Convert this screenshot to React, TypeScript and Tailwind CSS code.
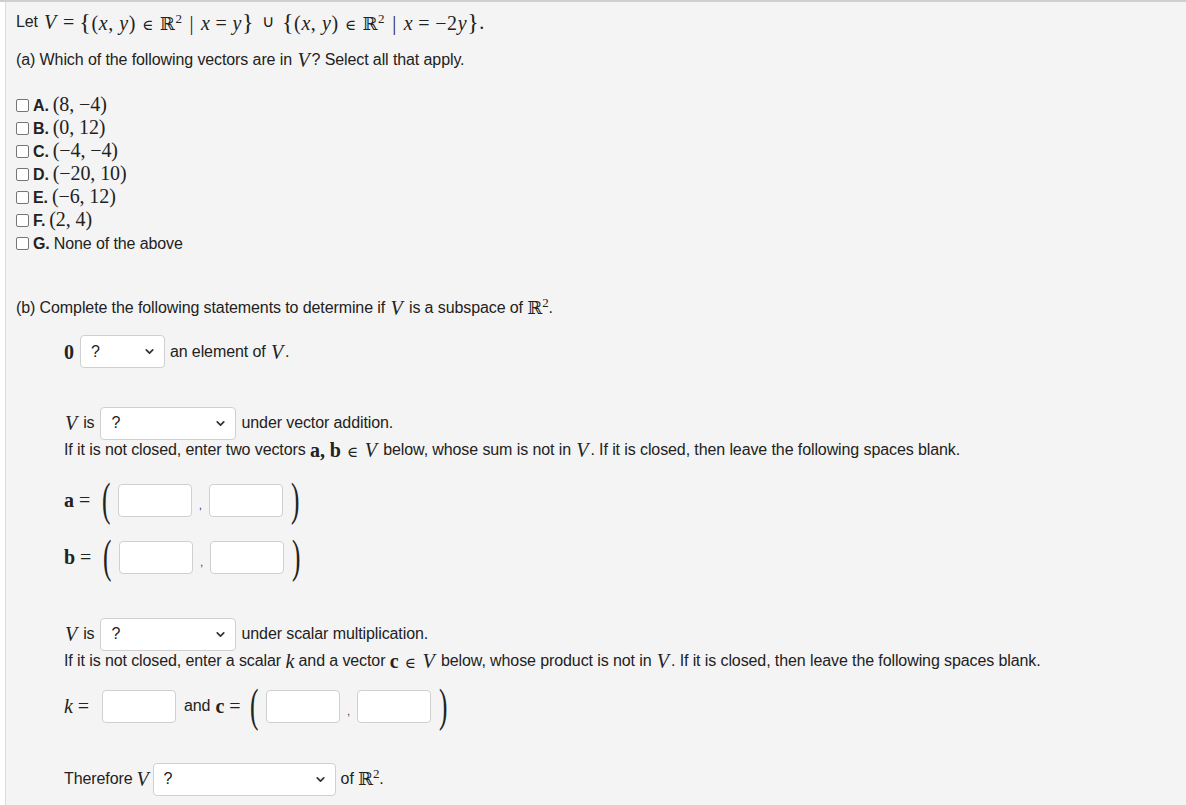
import { ChevronDown } from "lucide-react";

const serif = "font-['Liberation_Serif',serif]";

function M({ children, className = "" }: { children: React.ReactNode; className?: string }) {
  return <span className={`${serif} inline-flex items-baseline whitespace-pre text-[20px] leading-none ${className}`}>{children}</span>;
}

function I({ children }: { children: React.ReactNode }) {
  return <span className="italic">{children}</span>;
}

function V() {
  return <span className="pl-[1px] pr-[2px] italic">V</span>;
}

function B({ children }: { children: React.ReactNode }) {
  return <span className="font-bold">{children}</span>;
}

function Eq() {
  return <span className="mx-[5px]">=</span>;
}

function In() {
  return <span className="mx-[6px] font-['DejaVu_Serif',serif] text-[15px]">∈</span>;
}

function R2() {
  return (
    <span className="inline-flex items-start">
      <span className="font-['DejaVu_Serif',serif] text-[18px]">ℝ</span>
      <span className="-translate-y-[3px] text-[13px]">2</span>
    </span>
  );
}

function Select({ width }: { width: string }) {
  return (
    <div className={`flex h-[33px] ${width} items-center justify-between rounded-[4px] border border-[#d0d0d0] bg-white pl-[10px] pr-[8px] text-[16px] text-[#222]`}>
      <span>?</span>
      <ChevronDown size={13} strokeWidth={3.2} className="text-[#333]" />
    </div>
  );
}

function Box({ className = "" }: { className?: string }) {
  return <div className={`h-[33px] w-[74px] rounded-[4px] border border-[#d0d0d0] bg-white ${className}`} />;
}

function Paren({ right }: { right?: boolean }) {
  return (
    <span className={`${serif} inline-block w-[10px] origin-left scale-x-[0.55] text-left text-[46px] leading-none text-[#222]`}>
      {right ? ")" : "("}
    </span>
  );
}

function Pair() {
  return (
    <div className="flex items-center">
      <Paren />
      <Box className="ml-[6px]" />
      <span className="mx-[7px] mt-[10px] text-[10px]">,</span>
      <Box />
      <span className="w-[8px]" />
      <Paren right />
    </div>
  );
}

function SetPart({ right }: { right: React.ReactNode }) {
  return (
    <M className="tracking-[0.6px]">
      <span className="text-[24px]">{"{"}</span>(<I>x</I>,&nbsp;<I>y</I>)<In />
      <R2 />
      <span className="mx-[7px]">|</span>
      <I>x</I>
      <Eq />
      {right}
      <span className="text-[24px]">{"}"}</span>
    </M>
  );
}

const choices: [string, React.ReactNode][] = [
  ["A.", <M>(8, −4)</M>],
  ["B.", <M>(0, 12)</M>],
  ["C.", <M>(−4, −4)</M>],
  ["D.", <M>(−20, 10)</M>],
  ["E.", <M>(−6, 12)</M>],
  ["F.", <M>(2, 4)</M>],
  ["G.", <span className="font-normal"> None of the above</span>],
];

export default function App() {
  return (
    <div className="min-h-screen border-t-2 border-[#cfcfcf] bg-white font-['Liberation_Sans',Arial,sans-serif] text-[16px] tracking-[-0.1px] text-[#222]">
      <div className="ml-[5px] min-h-[803px] border-l border-[#dcdcdc] bg-[#f4f4f4] pl-[10px] pt-[5px]">
        <div className="flex h-[30px] items-center">
          <span className="mr-[5px]">Let</span>
          <M>
            <V />
            <Eq />
          </M>
          <SetPart right={<I>y</I>} />
          <span className="mx-[8px] text-[17px]">∪</span>
          <SetPart
            right={
              <>
                −2<I>y</I>
              </>
            }
          />
          <M>.</M>
        </div>

        <div className="mt-[11px] flex h-[24px] items-center">
          <span>(a) Which of the following vectors are in&nbsp;</span>
          <M>
            <V />
          </M>
          <span>? Select all that apply.</span>
        </div>

        <div className="mt-[22px]">
          {choices.map(([letter, value]) => (
            <label key={letter} className="flex h-[23px] items-center">
              <span className="mr-[4px] h-[13px] w-[13px] rounded-[2px] border border-[#767676] bg-white" />
              <span className="font-bold">{letter}</span>
              <span className="ml-[4px]">{value}</span>
            </label>
          ))}
        </div>

        <div className="mt-[41px] flex h-[24px] items-center">
          <span>(b) Complete the following statements to determine if&nbsp;</span>
          <M>
            <V />
          </M>
          <span>&nbsp;is a subspace of&nbsp;</span>
          <M>
            <R2 />
          </M>
          <span>.</span>
        </div>

        <div className="pl-[48px]">
          <div className="mt-[15px] flex h-[33px] items-center">
            <M className="mr-[6px]">
              <B>0</B>
            </M>
            <Select width="w-[85px]" />
            <span className="ml-[5px]">an element of&nbsp;</span>
            <M>
              <V />
            </M>
            <span>.</span>
          </div>

          <div className="mt-[39px] flex h-[32px] items-center">
            <M>
              <V />
            </M>
            <span className="ml-[4px] mr-[6px]">is</span>
            <Select width="w-[136px]" />
            <span className="ml-[5px]">under vector addition.</span>
          </div>
          <div className="flex h-[22px] items-center">
            <span>If it is not closed, enter two vectors&nbsp;</span>
            <M>
              <B>a,&nbsp;b</B>
              <In />
              <V />
            </M>
            <span>&nbsp;below, whose sum is not in&nbsp;</span>
            <M>
              <V />
            </M>
            <span>. If it is closed, then leave the following spaces blank.</span>
          </div>

          <div className="mt-[19px] flex h-[40px] items-center">
            <M className="mr-[7px]">
              <B>a</B>
              <Eq />
            </M>
            <Pair />
          </div>
          <div className="mt-[17px] flex h-[40px] items-center">
            <M className="mr-[7px]">
              <B>b</B>
              <Eq />
            </M>
            <Pair />
          </div>

          <div className="mt-[41px] flex h-[32px] items-center">
            <M>
              <V />
            </M>
            <span className="ml-[4px] mr-[6px]">is</span>
            <Select width="w-[136px]" />
            <span className="ml-[5px]">under scalar multiplication.</span>
          </div>
          <div className="flex h-[22px] items-center">
            <span>If it is not closed, enter a scalar&nbsp;</span>
            <M>
              <I>k</I>
            </M>
            <span>&nbsp;and a vector&nbsp;</span>
            <M>
              <B>c</B>
              <In />
              <V />
            </M>
            <span>&nbsp;below, whose product is not in&nbsp;</span>
            <M>
              <V />
            </M>
            <span>. If it is closed, then leave the following spaces blank.</span>
          </div>

          <div className="mt-[14px] flex h-[40px] items-center">
            <M className="mr-[8px]">
              <I>k</I>
              <Eq />
            </M>
            <Box />
            <span className="ml-[8px] mr-[5px]">and</span>
            <M className="mr-[5px]">
              <B>c</B>
              <Eq />
            </M>
            <Pair />
          </div>

          <div className="mt-[37px] flex h-[32px] items-center">
            <span className="mr-[3px]">Therefore</span>
            <M className="mr-[2px]">
              <V />
            </M>
            <Select width="w-[183px]" />
            <span className="ml-[5px]">of&nbsp;</span>
            <M>
              <R2 />
            </M>
            <span>.</span>
          </div>
        </div>
      </div>
    </div>
  );
}
